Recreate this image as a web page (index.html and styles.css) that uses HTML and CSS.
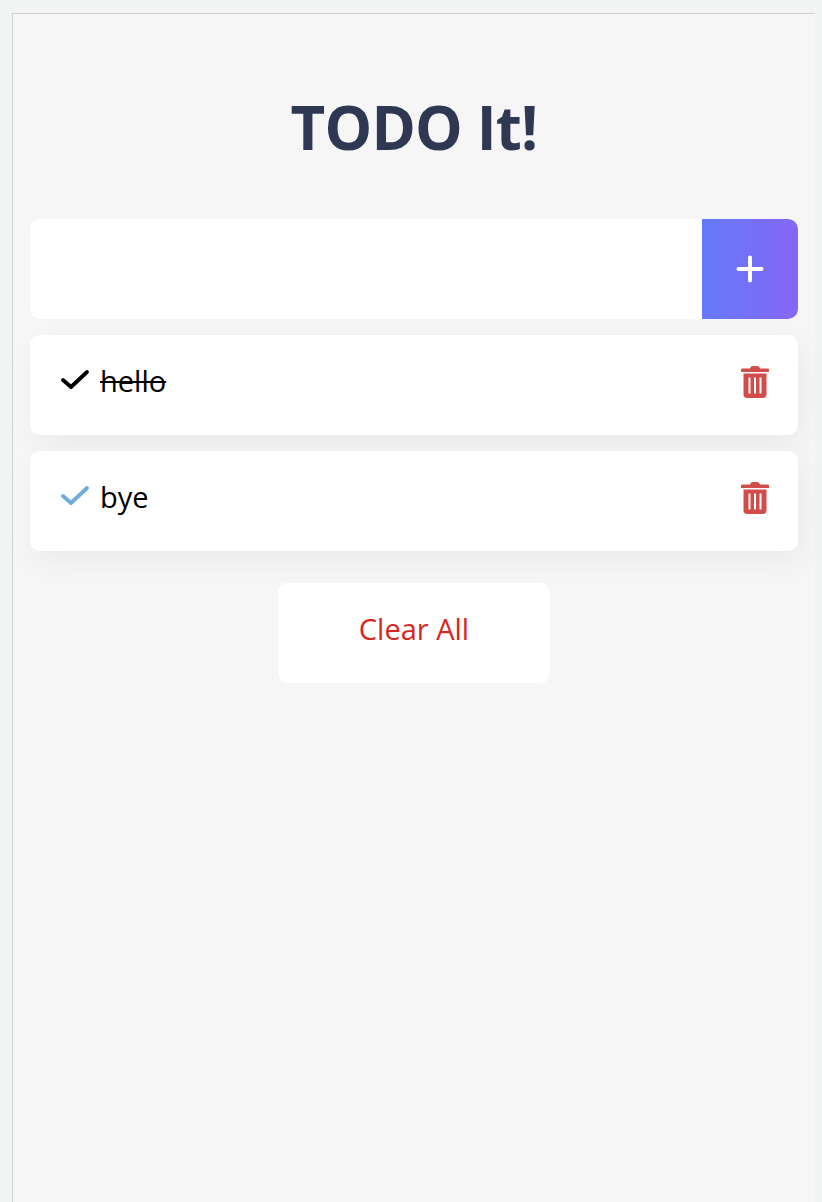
FILE: index.html
```html
<!DOCTYPE html>
<html lang="en">
<head>
<meta charset="utf-8">
<title>TODO It!</title>
<link rel="stylesheet" href="styles.css">
</head>
<body>
<div class="frame">
	<div class="app">
		<h1 class="title">TODO It!</h1>
		<div class="input-box">
			<input class="todo-input" type="text">
			<span class="add-btn">
				<svg width="28" height="28" viewBox="0 0 28 28"><path d="M14 2.500v23M2.500 14h23" fill="none" stroke="#fff" stroke-width="4" stroke-linecap="round"/></svg>
			</span>
		</div>
		<ul class="todo-list">
			<li class="todo-item">
				<svg class="check" width="30" height="22" viewBox="0 0 30 22"><path d="M3 11l8 7L27 3" fill="none" stroke="#000" stroke-width="3.800" stroke-linecap="round" stroke-linejoin="round"/></svg>
				<span class="todo-text done">hello</span>
				<svg class="trash" width="28" height="34" viewBox="0 0 28 34"><path d="M1.500 3.500H9C9.500 1.800 10.500 1 12 1h4c1.500 0 2.500.8 3 2.500h7.500a1.800 1.800 0 0 1 0 3.600h-25a1.800 1.800 0 0 1 0-3.600zM2.500 8.500h23v21c0 2-1.500 3.500-3.500 3.500H6c-2 0-3.500-1.500-3.500-3.500zM7.500 12.500v16h2v-16zm5.500 0v16h2v-16zm5.500 0v16h2v-16z" fill="#d24c4a" fill-rule="evenodd"/></svg>
			</li>
			<li class="todo-item">
				<svg class="check" width="30" height="22" viewBox="0 0 30 22"><path d="M3 11l8 7L27 3" fill="none" stroke="#6fabdc" stroke-width="3.800" stroke-linecap="round" stroke-linejoin="round"/></svg>
				<span class="todo-text">bye</span>
				<svg class="trash" width="28" height="34" viewBox="0 0 28 34"><path d="M1.500 3.500H9C9.500 1.800 10.500 1 12 1h4c1.500 0 2.500.8 3 2.500h7.500a1.800 1.800 0 0 1 0 3.600h-25a1.800 1.800 0 0 1 0-3.600zM2.500 8.500h23v21c0 2-1.500 3.500-3.500 3.500H6c-2 0-3.500-1.500-3.500-3.500zM7.500 12.500v16h2v-16zm5.500 0v16h2v-16zm5.500 0v16h2v-16z" fill="#d24c4a" fill-rule="evenodd"/></svg>
			</li>
		</ul>
		<div class="clear-wrap">
			<span class="clear-btn">Clear All</span>
		</div>
	</div>
</div>
</body>
</html>
```

FILE: styles.css
```css
*{margin:0;padding:0;box-sizing:border-box;}
html,body{height:100%;overflow:hidden;}
body{background:#f2f4f3;padding:13px 7px 0 12px;font-family:"Open Sans",sans-serif;color:#000;}
.frame{height:100%;background:#f6f6f6;border-top:1px solid #cfd1d0;border-left:1px solid #cfd1d0;}
.app{padding:0 17px;}
.title{height:205px;padding-top:79px;font-size:60px;line-height:68px;font-weight:700;text-align:center;color:#2f3853;letter-spacing:-.8px;}
.input-box{display:flex;height:100px;background:#fff;border-radius:10px;overflow:hidden;}
.todo-input{flex:1;border:0;outline:0;background:transparent;}
.add-btn{display:flex;align-items:center;justify-content:center;width:96px;background:linear-gradient(to right,#6479f9,#8567f5);}
.todo-list{list-style:none;margin-top:16px;}
.todo-item{display:flex;align-items:center;height:100px;margin-bottom:16px;padding:0 29px 0 30px;background:#fff;border-radius:10px;box-shadow:5px 10px 30px rgba(0,0,0,.05);}
.check{margin-top:-10px;}
.todo-text{flex:1;margin-left:10px;font-size:29px;line-height:36px;margin-top:-8px;}
.done{text-decoration:line-through;text-decoration-thickness:2px;}
.trash{margin-top:-6px;}
.clear-wrap{display:flex;justify-content:center;margin-top:32px;}
.clear-btn{width:272px;height:100px;padding-top:26px;background:#fff;border-radius:10px;text-align:center;font-size:29px;line-height:40px;color:#d6281f;}
```
